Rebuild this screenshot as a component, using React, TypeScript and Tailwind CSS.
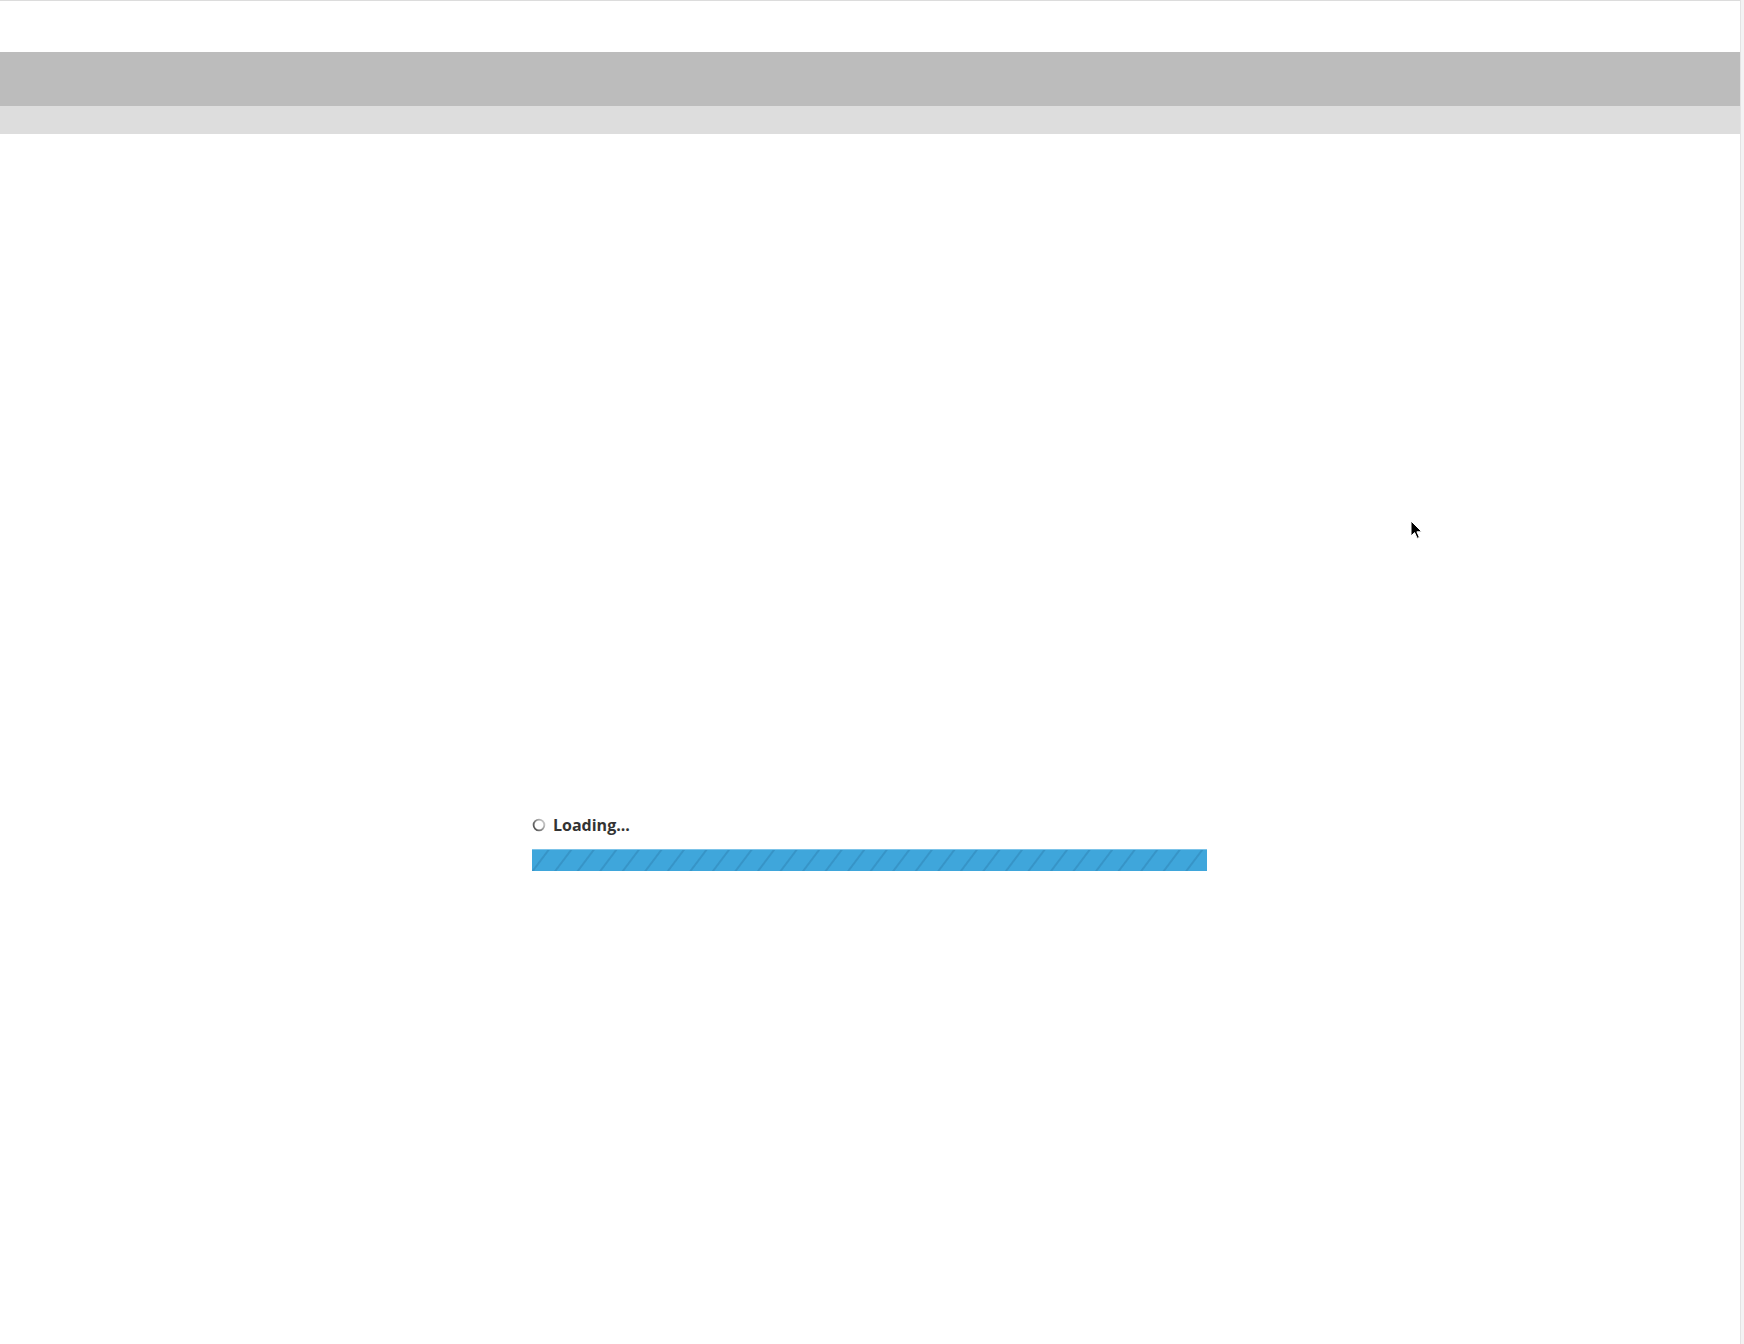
import React from "react";

export default function App() {
  return (
    <div className="relative flex h-[1344px] w-full flex-row bg-white" style={{ fontFamily: '"Open Sans", "Liberation Sans", sans-serif' }}>
      <div className="flex flex-1 flex-col border-t border-[#dcdcdc]">
        <div className="h-[51px] bg-white" />
        <div className="h-[54px] bg-[#bcbcbc]" />
        <div className="h-[28px] bg-[#dddddd]" />
        <div className="flex flex-col pl-[532px] pt-[679px]">
          <div className="flex h-[24px] items-center gap-[7px]">
            <svg width="14" height="14" viewBox="0 0 14 14">
              <defs>
                <linearGradient id="sp" x1="1" y1="0" x2="0" y2="0.6">
                  <stop offset="0" stopColor="#d6d6d6" />
                  <stop offset="1" stopColor="#5a5a5a" />
                </linearGradient>
              </defs>
              <circle cx="7" cy="7" r="5.4" fill="none" stroke="url(#sp)" strokeWidth="1.8" />
            </svg>
            <span className="text-[16px] font-bold leading-[24px] text-[#333333]">Loading...</span>
          </div>
          <div
            className="mt-[12px] h-[22px] w-[675px] border-t border-[#7cc3e8] bg-[#3fa6db]"
            style={{
              backgroundImage:
                "repeating-linear-gradient(-53deg, transparent 0px, transparent 15px, rgba(30,95,140,0.25) 16px, rgba(30,95,140,0.25) 17px, transparent 18px)",
            }}
          />
        </div>
      </div>
      <div className="w-[4px] border-l border-[#e3e3e3] bg-[#f3f3f3]" />
      <svg className="absolute left-[1410px] top-[520px]" width="14" height="20" viewBox="0 0 14 20">
        <path d="M1 1 L1 16 L4.6 12.6 L7.2 18.4 L9.4 17.4 L6.9 11.8 L11.8 11.8 Z" fill="#000" stroke="#fff" strokeWidth="1" />
      </svg>
    </div>
  );
}
